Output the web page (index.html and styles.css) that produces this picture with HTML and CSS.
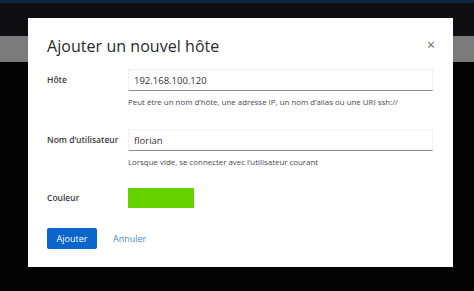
FILE: index.html
```html
<!DOCTYPE html>
<html lang="fr">
<head>
    <meta charset="UTF-8">
    <title>Ajouter un nouvel hôte</title>
    <link rel="stylesheet" href="styles.css">
</head>
<body>
    <div class="backdrop">
        <div class="topbar"></div>
        <div class="header"></div>
        <div class="toolbar"></div>
        <div class="rest"></div>
    </div>

    <div class="modal">
        <div class="modal-head">
            <h1>Ajouter un nouvel hôte</h1>
            <span class="close">&times;</span>
        </div>
        <div class="row">
            <label>Hôte</label>
            <div class="field">
                <input type="text" value="192.168.100.120">
                <p class="help">Peut être un nom d’hôte, une adresse IP, un nom d’alias ou une URI ssh://</p>
            </div>
        </div>
        <div class="row">
            <label>Nom d’utilisateur</label>
            <div class="field">
                <input type="text" value="florian">
                <p class="help">Lorsque vide, se connecter avec l’utilisateur courant</p>
            </div>
        </div>
        <div class="row color-row">
            <label>Couleur</label>
            <div class="swatch"></div>
        </div>
        <div class="actions">
            <button>Ajouter</button>
            <a href="#">Annuler</a>
        </div>
    </div>
</body>
</html>
```

FILE: styles.css
```css
body {
    margin: 0;
    font-family: "Open Sans", "Liberation Sans", sans-serif;
    background-color: #030303;
    width: 474px;
    height: 291px;
    overflow: hidden;
}
.backdrop .topbar {
    height: 3px;
    background-color: #0d2542;
}
.backdrop .header {
    height: 33px;
    background-color: #0f0f11;
}
.backdrop .toolbar {
    height: 26px;
    background-color: #7b7b7b;
}
.modal {
    position: absolute;
    top: 18px;
    left: 28px;
    width: 425px;
    height: 249px;
    box-sizing: border-box;
    background-color: white;
    padding: 0 20px 0 19px;
}
.modal-head {
    display: flex;
    justify-content: space-between;
    align-items: center;
    height: 51px;
}
h1 {
    margin: 0;
    font-size: 16px;
    font-weight: 400;
    color: #2a2a2a;
    letter-spacing: 0.05px;
    padding-top: 4px;
}
.close {
    font-size: 14px;
    color: #6a6e73;
    margin-top: 2px;
    margin-right: -2px;
}
.row {
    display: flex;
    align-items: flex-start;
}
.row label {
    width: 81px;
    flex-shrink: 0;
    font-size: 8.5px;
    line-height: 12px;
    font-weight: 600;
    color: #3a3a3a;
    padding-top: 5px;
}
.field {
    flex: 1;
}
input {
    display: block;
    width: 100%;
    height: 22px;
    box-sizing: border-box;
    border: 1px solid #f0f0f0;
    border-bottom: 1px solid #8a8d90;
    padding: 0 5px;
    font-family: "Open Sans", "Liberation Sans", sans-serif;
    font-size: 9.5px;
    color: #333;
    outline: none;
}
.help {
    margin: 6px 0 0;
    font-size: 7.9px;
    line-height: 11px;
    color: #4a4a4a;
    height: 32px;
}
.color-row {
    align-items: center;
    height: 20px;
    margin-top: -1px;
}
.color-row label {
    padding-top: 0;
}
.swatch {
    width: 66px;
    height: 20px;
    background-color: #66d300;
}
.actions {
    display: flex;
    align-items: center;
    gap: 16px;
    margin-top: 20px;
}
button {
    padding: 0;
    width: 50px;
    height: 21px;
    background-color: #0a66cc;
    color: white;
    border: none;
    border-radius: 2px;
    font-family: "Open Sans", "Liberation Sans", sans-serif;
    font-size: 9px;
}
.actions a {
    color: #4d8ad6;
    text-decoration: none;
    font-size: 9px;
}
```
